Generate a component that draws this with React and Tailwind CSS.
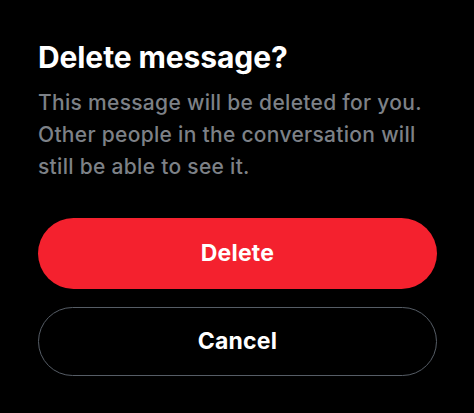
export default function App() {
  return (
    <div className="w-[474px] h-[413px] bg-black overflow-hidden" style={{ fontFamily: 'Inter, "Noto Sans", sans-serif' }}>
      <div className="pl-[38px] pr-[37px] pt-[39px]">
        <h1 className="text-[30px] leading-[36px] font-bold text-white tracking-[-0.1px]">Delete message?</h1>
        <p className="mt-[12px] text-[21px] leading-[32px] text-[#7d8187] font-medium tracking-[0.3px]">
          This message will be deleted for you.<br />Other people in the conversation will<br />still be able to see it.
        </p>
        <div className="mt-[35px] flex flex-col gap-[18px]">
          <button className="h-[71px] w-full rounded-full bg-[#f4212e] text-white text-[23px] font-bold tracking-[0.2px]">Delete</button>
          <button className="h-[69px] w-full rounded-full border-[1.5px] border-[#565d66] text-white text-[23px] font-bold tracking-[0.2px]">Cancel</button>
        </div>
      </div>
    </div>
  );
}
